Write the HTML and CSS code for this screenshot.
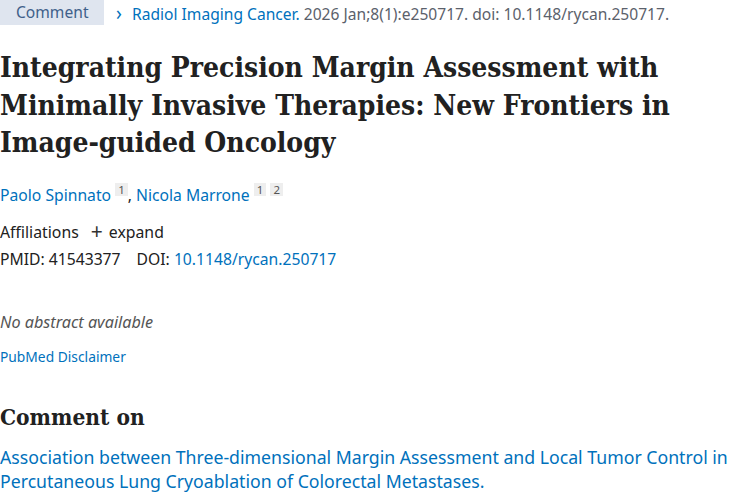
FILE: index.html
```html
<!DOCTYPE html>
<html>
<head>
  <title>Comment - PubMed</title>
  <link rel="stylesheet" href="styles.css">
</head>
<body>
<main class="article">
  <div class="citation-bar">
    <span class="pub-type">Comment</span>
    <span class="journal">
      <span class="chevron">&#8250;</span>
      <a href="#">Radiol Imaging Cancer.</a>
      <span class="cit">2026 Jan;8(1):e250717. doi: 10.1148/rycan.250717.</span>
    </span>
  </div>

  <h1 class="heading-title">Integrating Precision Margin Assessment with Minimally Invasive Therapies: New Frontiers in Image-guided Oncology</h1>

  <div class="authors">
    <a href="#">Paolo Spinnato</a> <sup class="aff">1</sup>, <a href="#">Nicola Marrone</a> <sup class="aff">1</sup> <sup class="aff">2</sup>
  </div>

  <div class="affiliations">
    Affiliations <span class="expand"><span class="plus">+</span>expand</span>
  </div>

  <div class="ids">
    <span>PMID: 41543377</span>
    <span>DOI: <a href="#">10.1148/rycan.250717</a></span>
  </div>

  <p class="no-abstract">No abstract available</p>
  <a class="disclaimer" href="#">PubMed Disclaimer</a>

  <h2 class="section-title">Comment on</h2>
  <a class="comment-link" href="#">Association between Three-dimensional Margin Assessment and Local Tumor Control in Percutaneous Lung Cryoablation of Colorectal Metastases.</a>
</main>
</body>
</html>
```

FILE: styles.css
```css
body {
  margin: 0;
  font-family: "Noto Sans", sans-serif;
  color: #212121;
  background: #fff;
}

a {
  color: #0071bc;
  text-decoration: none;
}

.citation-bar {
  display: flex;
  align-items: center;
  font-size: 15.6px;
  height: 25px;
}

.pub-type {
  background-color: #dfe5ef;
  color: #40608a;
  padding: 0 16px;
  height: 25px;
  line-height: 25px;
  width: 72px;
}

.journal {
  margin-left: 12px;
  color: #5b616b;
}

.chevron {
  color: #0071bc;
  font-size: 19px;
  margin-right: 6px;
}

.heading-title {
  font-family: "DejaVu Serif Condensed", "DejaVu Serif", serif;
  font-size: 28px;
  line-height: 37.5px;
  font-weight: bold;
  color: #212121;
  margin: 24px 0 21px;
}

.authors {
  font-size: 15.7px;
  line-height: 24px;
}

.aff {
  display: inline-block;
  background-color: #eeeeee;
  color: #555;
  font-size: 11.5px;
  line-height: 13px;
  padding: 0 3px;
  vertical-align: 7px;
}

.affiliations {
  font-size: 15.8px;
  margin-top: 13px;
  line-height: 24px;
}

.expand {
  margin-left: 8px;
}

.plus {
  font-size: 21px;
  color: #333;
  margin-right: 6px;
  vertical-align: -1px;
  line-height: 0;
}

.ids {
  font-size: 15.7px;
  margin-top: 3px;
  line-height: 24px;
  display: flex;
  gap: 16px;
}

.no-abstract {
  font-style: italic;
  color: #555;
  font-size: 16.2px;
  margin: 40px 0 14px;
}

.disclaimer {
  font-size: 13.8px;
  display: block;
}

.section-title {
  font-family: "DejaVu Serif Condensed", "DejaVu Serif", serif;
  font-size: 22.5px;
  font-weight: bold;
  margin: 38px 0 15px;
}

.comment-link {
  display: block;
  font-size: 17.7px;
  line-height: 24px;
}
```
